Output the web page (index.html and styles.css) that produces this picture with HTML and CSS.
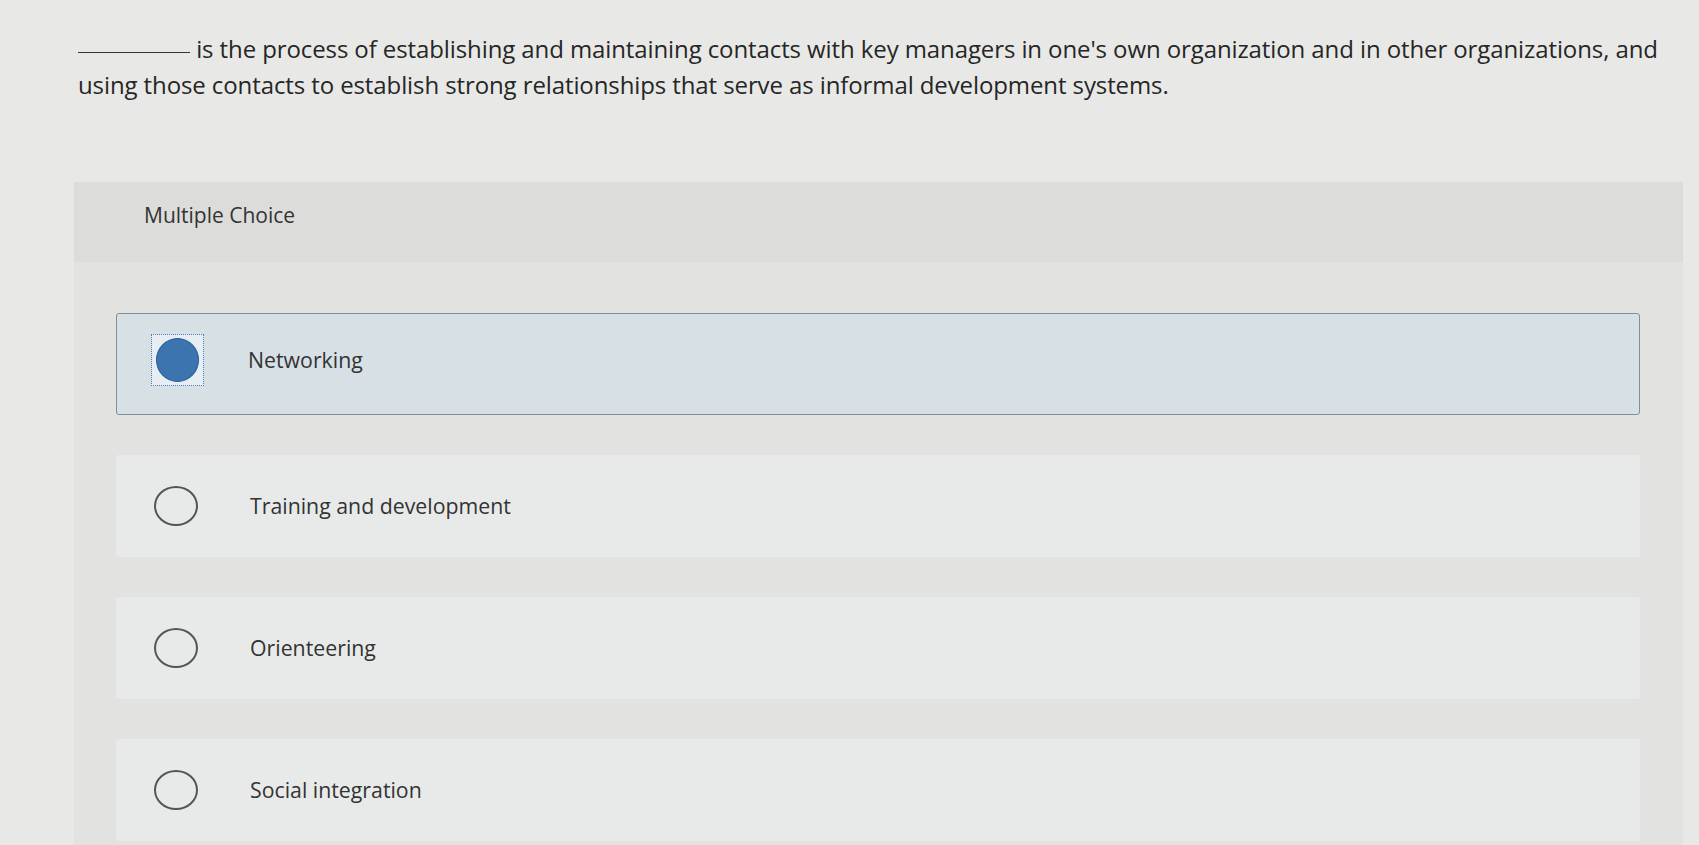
FILE: index.html
```html
<!DOCTYPE html>
<html lang="en">
<head>
<meta charset="utf-8">
<title>Multiple Choice</title>
<link rel="stylesheet" href="styles.css">
</head>
<body>
<main class="page">
  <p class="question"><span class="blank"></span> is the process of establishing and maintaining contacts with key managers in one's own organization and in other organizations, and using those contacts to establish strong relationships that serve as informal development systems.</p>

  <section class="card">
    <header class="card-header">Multiple Choice</header>
    <div class="options">
      <label class="option selected">
        <span class="focus"><span class="radio filled"></span></span>
        <span class="label">Networking</span>
      </label>
      <label class="option">
        <span class="radio"></span>
        <span class="label">Training and development</span>
      </label>
      <label class="option">
        <span class="radio"></span>
        <span class="label">Orienteering</span>
      </label>
      <label class="option">
        <span class="radio"></span>
        <span class="label">Social integration</span>
      </label>
    </div>
  </section>
</main>
</body>
</html>
```

FILE: styles.css
```css
html, body {
  margin: 0;
  padding: 0;
}

body {
  background: #e8e9e7;
  font-family: "Open Sans", "Liberation Sans", sans-serif;
  color: #2c2c2c;
  overflow: hidden;
}

.page {
  padding: 31px 16px 0 0;
}

.question {
  margin: 0 0 0 78px;
  width: 1600px;
  font-size: 24px;
  line-height: 36px;
  letter-spacing: -0.1px;
  color: #262626;
}

.blank {
  display: inline-block;
  width: 112px;
  border-bottom: 1.5px solid #333;
  vertical-align: 5px;
}

.card {
  margin: 79px 0 0 74px;
  background: #e2e3e1;
  min-height: 700px;
}

.card-header {
  background: #dcdddb;
  height: 80px;
  box-sizing: border-box;
  padding: 20px 0 0 70px;
  font-size: 21px;
  line-height: 26px;
  color: #333;
}

.options {
  display: flex;
  flex-direction: column;
  gap: 40px;
  padding: 51px 43px 0 42px;
}

.option {
  display: flex;
  align-items: center;
  height: 102px;
  box-sizing: border-box;
  background: #e8eae9;
  border-radius: 3px;
  padding-left: 38px;
  font-size: 21.3px;
  color: #333;
}

.option.selected {
  background: #d6e0e5;
  border: 1.5px solid #858e94;
  padding-left: 35px;
  padding-bottom: 8px;
}

.focus {
  display: flex;
  align-items: center;
  justify-content: center;
  width: 53px;
  height: 52px;
  box-sizing: border-box;
  border: 1.5px dotted #4a78a8;
  background: #e6eef3;
  margin-right: 44px;
  margin-left: -1px;
}

.radio {
  display: block;
  width: 44px;
  height: 40px;
  box-sizing: border-box;
  border: 2px solid #555;
  border-radius: 50%;
  margin-right: 52px;
}

.radio.filled {
  width: 43px;
  height: 44px;
  margin-right: 0;
  background: #3c74b0;
  border: 1.5px solid #2b5d94;
}

.label {
  line-height: 26px;
}
```
